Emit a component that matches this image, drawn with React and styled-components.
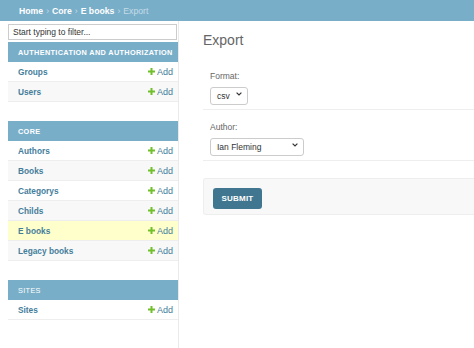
import styled, { createGlobalStyle } from "styled-components"

const GlobalStyle = createGlobalStyle`
    html, body {
        margin: 0;
        padding: 0;
        background: #fff;
        font-family: "Liberation Sans", Arial, sans-serif;
        color: #333;
    }
    * { box-sizing: border-box; }
`

const Page = styled.div`
    width: 474px;
    height: 348px;
    overflow: hidden;
    display: flex;
    flex-direction: column;
`

const Header = styled.div`
    height: 21px;
    flex-shrink: 0;
    background: #79aec8;
    display: flex;
    align-items: center;
    padding-left: 19px;
    font-size: 8.7px;
    color: #c4dce8;
    gap: 3px;
`

const Crumb = styled.span`
    color: ${props => props.current ? "#c4dce8" : "#fff"};
    font-weight: ${props => props.current ? 400 : 700};
`

const Sep = styled.span`
    color: #c4dce8;
    font-size: 8.5px;
`

const Body = styled.div`
    flex: 1;
    display: flex;
`

const Sidebar = styled.div`
    width: 171px;
    margin-left: 8px;
    border-right: 1px solid #eaeaea;
    padding-top: 3px;
    flex-shrink: 0;
`

const Filter = styled.input`
    display: block;
    width: 169px;
    height: 16px;
    border: 1px solid #ccc;
    padding: 0 4px;
    font-family: inherit;
    font-size: 8.5px;
    color: #333;
    outline: none;
    &::placeholder { color: #333; }
`

const Module = styled.div`
    margin-top: ${props => props.first ? "2px" : "0"};
    margin-bottom: 19px;
    width: 170px;
`

const Caption = styled.div`
    height: 20px;
    background: #79aec8;
    color: #fff;
    display: flex;
    align-items: center;
    padding-left: 10px;
    font-size: 7.3px;
    letter-spacing: 0.35px;
    white-space: nowrap;
    font-weight: ${props => props.light ? 400 : 700};
    text-transform: uppercase;
`

const Row = styled.div`
    height: 20px;
    display: flex;
    align-items: center;
    justify-content: space-between;
    padding: 0 5px 0 10px;
    border-bottom: 1px solid #eee;
    background: ${props => props.selected ? "#ffffcc" : props.alt ? "#f8f8f8" : "#fff"};
`

const RowLink = styled.span`
    color: #447e9b;
    font-weight: 700;
    font-size: 8.3px;
`

const AddLink = styled.span`
    color: #447e9b;
    font-size: 9px;
    display: flex;
    align-items: center;
    gap: 2px;
`

const Main = styled.div`
    flex: 1;
    padding-left: 24px;
    padding-top: 9px;
`

const Title = styled.h1`
    margin: 0;
    font-size: 14px;
    line-height: 20px;
    font-weight: 400;
    color: #666;
    height: 29px;
`

const FormRow = styled.div`
    padding: 11px 7px 6px;
    border-bottom: 1px solid #eee;
`

const Label = styled.div`
    font-size: 8.5px;
    line-height: 12px;
    color: #666;
    margin-bottom: 3px;
`

const SelectWrap = styled.div`
    position: relative;
    width: ${props => props.width}px;
    height: 18px;
`

const Select = styled.select`
    appearance: none;
    width: 100%;
    height: 100%;
    border: 1px solid #ccc;
    border-radius: 3px;
    background: #fff;
    font-family: inherit;
    font-size: 8.5px;
    color: #333;
    padding: 0 0 0 6px;
`

const Chevron = styled.svg`
    position: absolute;
    right: 6px;
    top: 7px;
    pointer-events: none;
`

const SubmitRow = styled.div`
    margin-top: 17px;
    height: 37px;
    background: #f8f8f8;
    border: 1px solid #eee;
    border-right: none;
    border-radius: 3px 0 0 3px;
    padding: 8px 9px;
`

const Button = styled.button`
    width: 49px;
    height: 21px;
    border: none;
    border-radius: 3px;
    background: #417690;
    color: #fff;
    font-family: inherit;
    font-weight: 700;
    font-size: 8px;
    letter-spacing: 0.2px;
    padding: 0;
`

const Plus = () => (
    <svg width="7" height="7" viewBox="0 0 7 7">
        <path d="M2.5 0h2v2.5H7v2H4.5V7h-2V4.5H0v-2h2.5z" fill="#70bf2b" />
    </svg>
)

const ChevronIcon = () => (
    <Chevron width="6" height="4" viewBox="0 0 6 4">
        <path d="M0.6 0.6L3 3L5.4 0.6" fill="none" stroke="#333" strokeWidth="1.2" />
    </Chevron>
)

const modules = [
    { name: "Authentication and Authorization", items: ["Groups", "Users"] },
    { name: "Core", items: ["Authors", "Books", "Categorys", "Childs", "E books", "Legacy books"] },
    { name: "Sites", items: ["Sites"], light: true },
]

const App = () => {
    return (
        <Page>
            <GlobalStyle />
            <Header>
                <Crumb>Home</Crumb><Sep>›</Sep>
                <Crumb>Core</Crumb><Sep>›</Sep>
                <Crumb>E books</Crumb><Sep>›</Sep>
                <Crumb current>Export</Crumb>
            </Header>
            <Body>
                <Sidebar>
                    <Filter placeholder="Start typing to filter..." />
                    {modules.map((m, i) => (
                        <Module key={m.name} first={i === 0}>
                            <Caption light={m.light}>{m.name}</Caption>
                            {m.items.map((item, j) => (
                                <Row key={item} alt={j % 2 === 1} selected={item === "E books"}>
                                    <RowLink>{item}</RowLink>
                                    <AddLink><Plus />Add</AddLink>
                                </Row>
                            ))}
                        </Module>
                    ))}
                </Sidebar>
                <Main>
                    <Title>Export</Title>
                    <FormRow>
                        <Label>Format:</Label>
                        <SelectWrap width={38}>
                            <Select defaultValue="csv">
                                <option value="csv">csv</option>
                            </Select>
                            <ChevronIcon />
                        </SelectWrap>
                    </FormRow>
                    <FormRow>
                        <Label>Author:</Label>
                        <SelectWrap width={94}>
                            <Select defaultValue="ian">
                                <option value="ian">Ian Fleming</option>
                            </Select>
                            <ChevronIcon />
                        </SelectWrap>
                    </FormRow>
                    <SubmitRow>
                        <Button>SUBMIT</Button>
                    </SubmitRow>
                </Main>
            </Body>
        </Page>
    )
}

export default App
